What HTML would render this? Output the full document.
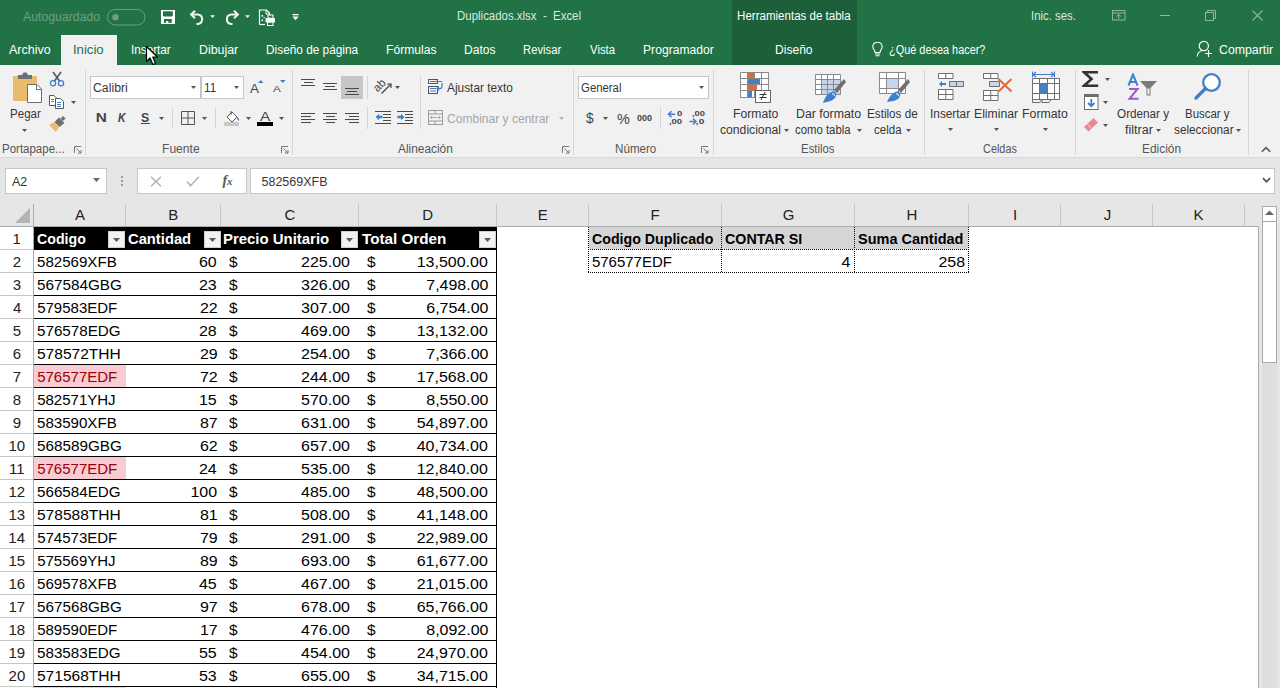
<!DOCTYPE html><html><head><meta charset="utf-8"><style>
*{margin:0;padding:0;box-sizing:border-box}
html,body{width:1280px;height:688px;overflow:hidden;background:#fff;font-family:"Liberation Sans",sans-serif;position:relative}
.a{position:absolute}
.t{position:absolute;white-space:nowrap;line-height:1}
.cell{position:absolute;white-space:nowrap;font-size:15px;line-height:22px;height:22px;color:#000}
.hdr{position:absolute;font-size:14px;color:#222;line-height:22px;text-align:center}
.rh{position:absolute;left:0;width:29px;text-align:right;font-size:14px;color:#222;line-height:22px}
.tab{position:absolute;top:42px;font-size:12.5px;color:#fff;line-height:16px;white-space:nowrap}
.rb{position:absolute;font-size:12.5px;color:#262626;line-height:16px;white-space:nowrap}
.gl{position:absolute;font-size:12.5px;color:#444;line-height:16px;white-space:nowrap}
.sep{position:absolute;width:1px;background:#d4d4d4}
.dd{position:absolute;width:0;height:0;border-left:3px solid transparent;border-right:3px solid transparent;border-top:3px solid #555}
</style></head><body>
<div class="a" style="left:0;top:0;width:1280px;height:65px;background:#217346"></div>
<div class="a" style="left:732px;top:0;width:125px;height:65px;background:#1d5f39"></div>
<div class="a" style="left:61px;top:35px;width:56px;height:30px;background:#f1f1f1"></div>
<div class="a" style="left:0;top:65px;width:1280px;height:92px;background:#f1f1f1"></div>
<div class="a" style="left:0;top:157px;width:1280px;height:1px;background:#d6dbd6"></div>
<div class="a" style="left:0;top:158px;width:1280px;height:69px;background:#e6e6e6"></div>
<div class="a" style="left:34px;top:227px;width:1224px;height:461px;background:#fff"></div>
<div class="a" style="left:1258px;top:226px;width:1px;height:462px;background:#ababab"></div>
<div class="a" style="left:0;top:226px;width:1258px;height:1px;background:#ababab"></div>
<div class="a" style="left:33px;top:204px;width:1px;height:484px;background:#ababab"></div>
<div class="a" style="left:125px;top:204px;width:1px;height:22px;background:#c6c6c6"></div>
<div class="t" style="left:75.00px;top:207.00px;font-size:15px;line-height:15px;color:#222;">A</div>
<div class="a" style="left:220px;top:204px;width:1px;height:22px;background:#c6c6c6"></div>
<div class="t" style="left:168.28px;top:207.00px;font-size:15px;line-height:15px;color:#222;">B</div>
<div class="a" style="left:358px;top:204px;width:1px;height:22px;background:#c6c6c6"></div>
<div class="t" style="left:284.50px;top:207.00px;font-size:15px;line-height:15px;color:#222;">C</div>
<div class="a" style="left:496px;top:204px;width:1px;height:22px;background:#c6c6c6"></div>
<div class="t" style="left:422.32px;top:207.00px;font-size:15px;line-height:15px;color:#222;">D</div>
<div class="a" style="left:588px;top:204px;width:1px;height:22px;background:#c6c6c6"></div>
<div class="t" style="left:537.70px;top:207.00px;font-size:15px;line-height:15px;color:#222;">E</div>
<div class="a" style="left:721px;top:204px;width:1px;height:22px;background:#c6c6c6"></div>
<div class="t" style="left:650.60px;top:207.00px;font-size:15px;line-height:15px;color:#222;">F</div>
<div class="a" style="left:854px;top:204px;width:1px;height:22px;background:#c6c6c6"></div>
<div class="t" style="left:782.85px;top:207.00px;font-size:15px;line-height:15px;color:#222;">G</div>
<div class="a" style="left:968px;top:204px;width:1px;height:22px;background:#c6c6c6"></div>
<div class="t" style="left:906.58px;top:207.00px;font-size:15px;line-height:15px;color:#222;">H</div>
<div class="a" style="left:1060px;top:204px;width:1px;height:22px;background:#c6c6c6"></div>
<div class="t" style="left:1012.90px;top:207.00px;font-size:15px;line-height:15px;color:#222;">I</div>
<div class="a" style="left:1152px;top:204px;width:1px;height:22px;background:#c6c6c6"></div>
<div class="t" style="left:1103.67px;top:207.00px;font-size:15px;line-height:15px;color:#222;">J</div>
<div class="a" style="left:1244px;top:204px;width:1px;height:22px;background:#c6c6c6"></div>
<div class="t" style="left:1193.47px;top:207.00px;font-size:15px;line-height:15px;color:#222;">K</div>
<div class="t" style="left:12.62px;top:231.00px;font-size:15px;line-height:15px;color:#222;">1</div>
<div class="a" style="left:0;top:249px;width:33px;height:1px;background:#c6c6c6"></div>
<div class="t" style="left:12.82px;top:254.00px;font-size:15px;line-height:15px;color:#222;">2</div>
<div class="a" style="left:0;top:272px;width:33px;height:1px;background:#c6c6c6"></div>
<div class="t" style="left:12.85px;top:277.00px;font-size:15px;line-height:15px;color:#222;">3</div>
<div class="a" style="left:0;top:295px;width:33px;height:1px;background:#c6c6c6"></div>
<div class="t" style="left:12.88px;top:300.00px;font-size:15px;line-height:15px;color:#222;">4</div>
<div class="a" style="left:0;top:318px;width:33px;height:1px;background:#c6c6c6"></div>
<div class="t" style="left:12.85px;top:323.00px;font-size:15px;line-height:15px;color:#222;">5</div>
<div class="a" style="left:0;top:341px;width:33px;height:1px;background:#c6c6c6"></div>
<div class="t" style="left:12.78px;top:346.00px;font-size:15px;line-height:15px;color:#222;">6</div>
<div class="a" style="left:0;top:364px;width:33px;height:1px;background:#c6c6c6"></div>
<div class="t" style="left:12.82px;top:369.00px;font-size:15px;line-height:15px;color:#222;">7</div>
<div class="a" style="left:0;top:387px;width:33px;height:1px;background:#c6c6c6"></div>
<div class="t" style="left:12.82px;top:392.00px;font-size:15px;line-height:15px;color:#222;">8</div>
<div class="a" style="left:0;top:410px;width:33px;height:1px;background:#c6c6c6"></div>
<div class="t" style="left:12.82px;top:415.00px;font-size:15px;line-height:15px;color:#222;">9</div>
<div class="a" style="left:0;top:433px;width:33px;height:1px;background:#c6c6c6"></div>
<div class="t" style="left:8.38px;top:438.00px;font-size:15px;line-height:15px;color:#222;">10</div>
<div class="a" style="left:0;top:456px;width:33px;height:1px;background:#c6c6c6"></div>
<div class="t" style="left:9.00px;top:461.00px;font-size:15px;line-height:15px;color:#222;">11</div>
<div class="a" style="left:0;top:479px;width:33px;height:1px;background:#c6c6c6"></div>
<div class="t" style="left:8.45px;top:484.00px;font-size:15px;line-height:15px;color:#222;">12</div>
<div class="a" style="left:0;top:502px;width:33px;height:1px;background:#c6c6c6"></div>
<div class="t" style="left:8.40px;top:507.00px;font-size:15px;line-height:15px;color:#222;">13</div>
<div class="a" style="left:0;top:525px;width:33px;height:1px;background:#c6c6c6"></div>
<div class="t" style="left:8.30px;top:530.00px;font-size:15px;line-height:15px;color:#222;">14</div>
<div class="a" style="left:0;top:548px;width:33px;height:1px;background:#c6c6c6"></div>
<div class="t" style="left:8.40px;top:553.00px;font-size:15px;line-height:15px;color:#222;">15</div>
<div class="a" style="left:0;top:571px;width:33px;height:1px;background:#c6c6c6"></div>
<div class="t" style="left:8.40px;top:576.00px;font-size:15px;line-height:15px;color:#222;">16</div>
<div class="a" style="left:0;top:594px;width:33px;height:1px;background:#c6c6c6"></div>
<div class="t" style="left:8.45px;top:599.00px;font-size:15px;line-height:15px;color:#222;">17</div>
<div class="a" style="left:0;top:617px;width:33px;height:1px;background:#c6c6c6"></div>
<div class="t" style="left:8.40px;top:622.00px;font-size:15px;line-height:15px;color:#222;">18</div>
<div class="a" style="left:0;top:640px;width:33px;height:1px;background:#c6c6c6"></div>
<div class="t" style="left:8.43px;top:645.00px;font-size:15px;line-height:15px;color:#222;">19</div>
<div class="a" style="left:0;top:663px;width:33px;height:1px;background:#c6c6c6"></div>
<div class="t" style="left:8.57px;top:668.00px;font-size:15px;line-height:15px;color:#222;">20</div>
<div class="a" style="left:0;top:686px;width:33px;height:1px;background:#c6c6c6"></div>
<div class="t" style="left:8.65px;top:691.00px;font-size:15px;line-height:15px;color:#222;">21</div>
<div class="a" style="left:0;top:709px;width:33px;height:1px;background:#c6c6c6"></div>
<svg class="a" style="left:15px;top:208px" width="16" height="15"><path d="M15 0 L15 15 L0 15 Z" fill="#b4b4b4"/></svg>
<div class="a" style="left:34px;top:227px;width:463px;height:23px;background:#000"></div>
<div class="a" style="left:34px;top:365px;width:92px;height:22px;background:#f7cdd3"></div>
<div class="a" style="left:34px;top:457px;width:92px;height:22px;background:#f7cdd3"></div>
<div class="a" style="left:34px;top:687px;width:92px;height:22px;background:#f7cdd3"></div>
<div class="a" style="left:34px;top:249px;width:463px;height:1px;background:#000"></div>
<div class="a" style="left:34px;top:272px;width:463px;height:1px;background:#000"></div>
<div class="a" style="left:34px;top:295px;width:463px;height:1px;background:#000"></div>
<div class="a" style="left:34px;top:318px;width:463px;height:1px;background:#000"></div>
<div class="a" style="left:34px;top:341px;width:463px;height:1px;background:#000"></div>
<div class="a" style="left:34px;top:364px;width:463px;height:1px;background:#000"></div>
<div class="a" style="left:34px;top:387px;width:463px;height:1px;background:#000"></div>
<div class="a" style="left:34px;top:410px;width:463px;height:1px;background:#000"></div>
<div class="a" style="left:34px;top:433px;width:463px;height:1px;background:#000"></div>
<div class="a" style="left:34px;top:456px;width:463px;height:1px;background:#000"></div>
<div class="a" style="left:34px;top:479px;width:463px;height:1px;background:#000"></div>
<div class="a" style="left:34px;top:502px;width:463px;height:1px;background:#000"></div>
<div class="a" style="left:34px;top:525px;width:463px;height:1px;background:#000"></div>
<div class="a" style="left:34px;top:548px;width:463px;height:1px;background:#000"></div>
<div class="a" style="left:34px;top:571px;width:463px;height:1px;background:#000"></div>
<div class="a" style="left:34px;top:594px;width:463px;height:1px;background:#000"></div>
<div class="a" style="left:34px;top:617px;width:463px;height:1px;background:#000"></div>
<div class="a" style="left:34px;top:640px;width:463px;height:1px;background:#000"></div>
<div class="a" style="left:34px;top:663px;width:463px;height:1px;background:#000"></div>
<div class="a" style="left:34px;top:686px;width:463px;height:1px;background:#000"></div>
<div class="a" style="left:496px;top:227px;width:1px;height:461px;background:#000"></div>
<div class="t" style="left:36.70px;top:231.00px;font-size:15px;line-height:15px;color:#fff;font-weight:bold;transform:scaleX(0.9446);transform-origin:0.60px 0;">Codigo</div>
<div class="t" style="left:128.40px;top:231.00px;font-size:15px;line-height:15px;color:#fff;font-weight:bold;transform:scaleX(0.9832);transform-origin:0.60px 0;">Cantidad</div>
<div class="t" style="left:223.00px;top:231.00px;font-size:15px;line-height:15px;color:#fff;font-weight:bold;transform:scaleX(0.9948);transform-origin:1.00px 0;">Precio Unitario</div>
<div class="t" style="left:362.25px;top:231.00px;font-size:15px;line-height:15px;color:#fff;font-weight:bold;transform:scaleX(1.0159);transform-origin:0.15px 0;">Total Orden</div>
<div class="a" style="left:108px;top:231px;width:17px;height:17px;background:#f2f2f2;border:1px solid #d0d0d0"></div>
<svg class="a" style="left:113px;top:238px" width="8" height="5"><path d="M0 0 L7 0 L3.5 4 Z" fill="#595959"/></svg>
<div class="a" style="left:204px;top:231px;width:17px;height:17px;background:#f2f2f2;border:1px solid #d0d0d0"></div>
<svg class="a" style="left:209px;top:238px" width="8" height="5"><path d="M0 0 L7 0 L3.5 4 Z" fill="#595959"/></svg>
<div class="a" style="left:341px;top:231px;width:17px;height:17px;background:#f2f2f2;border:1px solid #d0d0d0"></div>
<svg class="a" style="left:346px;top:238px" width="8" height="5"><path d="M0 0 L7 0 L3.5 4 Z" fill="#595959"/></svg>
<div class="a" style="left:479px;top:231px;width:17px;height:17px;background:#f2f2f2;border:1px solid #d0d0d0"></div>
<svg class="a" style="left:484px;top:238px" width="8" height="5"><path d="M0 0 L7 0 L3.5 4 Z" fill="#595959"/></svg>
<div class="t" style="left:37.20px;top:254.00px;font-size:15px;line-height:15px;color:#000;transform:scaleX(1.0064);transform-origin:0.60px 0;">582569XFB</div>
<div class="t" style="left:200.40px;top:254.00px;font-size:15px;line-height:15px;color:#000;transform:scaleX(1.0650);transform-origin:16.10px 0;">60</div>
<div class="t" style="left:229.15px;top:254.00px;font-size:15px;line-height:15px;color:#000;transform:scaleX(1.0314);transform-origin:0.15px 0;">$</div>
<div class="t" style="left:303.50px;top:254.00px;font-size:15px;line-height:15px;color:#000;transform:scaleX(1.0650);transform-origin:45.30px 0;">225.00</div>
<div class="t" style="left:366.85px;top:254.00px;font-size:15px;line-height:15px;color:#000;transform:scaleX(1.0314);transform-origin:0.15px 0;">$</div>
<div class="t" style="left:421.35px;top:254.00px;font-size:15px;line-height:15px;color:#000;transform:scaleX(1.0650);transform-origin:66.15px 0;">13,500.00</div>
<div class="t" style="left:37.20px;top:277.00px;font-size:15px;line-height:15px;color:#000;transform:scaleX(1.0167);transform-origin:0.60px 0;">567584GBG</div>
<div class="t" style="left:200.45px;top:277.00px;font-size:15px;line-height:15px;color:#000;transform:scaleX(1.0650);transform-origin:16.05px 0;">23</div>
<div class="t" style="left:229.15px;top:277.00px;font-size:15px;line-height:15px;color:#000;transform:scaleX(1.0314);transform-origin:0.15px 0;">$</div>
<div class="t" style="left:303.50px;top:277.00px;font-size:15px;line-height:15px;color:#000;transform:scaleX(1.0650);transform-origin:45.30px 0;">326.00</div>
<div class="t" style="left:366.85px;top:277.00px;font-size:15px;line-height:15px;color:#000;transform:scaleX(1.0314);transform-origin:0.15px 0;">$</div>
<div class="t" style="left:429.70px;top:277.00px;font-size:15px;line-height:15px;color:#000;transform:scaleX(1.0650);transform-origin:57.80px 0;">7,498.00</div>
<div class="t" style="left:37.20px;top:300.00px;font-size:15px;line-height:15px;color:#000;">579583EDF</div>
<div class="t" style="left:200.55px;top:300.00px;font-size:15px;line-height:15px;color:#000;transform:scaleX(1.0650);transform-origin:15.95px 0;">22</div>
<div class="t" style="left:229.15px;top:300.00px;font-size:15px;line-height:15px;color:#000;transform:scaleX(1.0314);transform-origin:0.15px 0;">$</div>
<div class="t" style="left:303.50px;top:300.00px;font-size:15px;line-height:15px;color:#000;transform:scaleX(1.0650);transform-origin:45.30px 0;">307.00</div>
<div class="t" style="left:366.85px;top:300.00px;font-size:15px;line-height:15px;color:#000;transform:scaleX(1.0314);transform-origin:0.15px 0;">$</div>
<div class="t" style="left:429.70px;top:300.00px;font-size:15px;line-height:15px;color:#000;transform:scaleX(1.0650);transform-origin:57.80px 0;">6,754.00</div>
<div class="t" style="left:37.20px;top:323.00px;font-size:15px;line-height:15px;color:#000;transform:scaleX(1.0125);transform-origin:0.60px 0;">576578EDG</div>
<div class="t" style="left:200.45px;top:323.00px;font-size:15px;line-height:15px;color:#000;transform:scaleX(1.0650);transform-origin:16.05px 0;">28</div>
<div class="t" style="left:229.15px;top:323.00px;font-size:15px;line-height:15px;color:#000;transform:scaleX(1.0314);transform-origin:0.15px 0;">$</div>
<div class="t" style="left:303.50px;top:323.00px;font-size:15px;line-height:15px;color:#000;transform:scaleX(1.0650);transform-origin:45.30px 0;">469.00</div>
<div class="t" style="left:366.85px;top:323.00px;font-size:15px;line-height:15px;color:#000;transform:scaleX(1.0314);transform-origin:0.15px 0;">$</div>
<div class="t" style="left:421.35px;top:323.00px;font-size:15px;line-height:15px;color:#000;transform:scaleX(1.0650);transform-origin:66.15px 0;">13,132.00</div>
<div class="t" style="left:37.20px;top:346.00px;font-size:15px;line-height:15px;color:#000;transform:scaleX(1.0353);transform-origin:0.60px 0;">578572THH</div>
<div class="t" style="left:200.50px;top:346.00px;font-size:15px;line-height:15px;color:#000;transform:scaleX(1.0650);transform-origin:16.00px 0;">29</div>
<div class="t" style="left:229.15px;top:346.00px;font-size:15px;line-height:15px;color:#000;transform:scaleX(1.0314);transform-origin:0.15px 0;">$</div>
<div class="t" style="left:303.50px;top:346.00px;font-size:15px;line-height:15px;color:#000;transform:scaleX(1.0650);transform-origin:45.30px 0;">254.00</div>
<div class="t" style="left:366.85px;top:346.00px;font-size:15px;line-height:15px;color:#000;transform:scaleX(1.0314);transform-origin:0.15px 0;">$</div>
<div class="t" style="left:429.70px;top:346.00px;font-size:15px;line-height:15px;color:#000;transform:scaleX(1.0650);transform-origin:57.80px 0;">7,366.00</div>
<div class="t" style="left:37.20px;top:369.00px;font-size:15px;line-height:15px;color:#9c0006;">576577EDF</div>
<div class="t" style="left:200.55px;top:369.00px;font-size:15px;line-height:15px;color:#000;transform:scaleX(1.0650);transform-origin:15.95px 0;">72</div>
<div class="t" style="left:229.15px;top:369.00px;font-size:15px;line-height:15px;color:#000;transform:scaleX(1.0314);transform-origin:0.15px 0;">$</div>
<div class="t" style="left:303.50px;top:369.00px;font-size:15px;line-height:15px;color:#000;transform:scaleX(1.0650);transform-origin:45.30px 0;">244.00</div>
<div class="t" style="left:366.85px;top:369.00px;font-size:15px;line-height:15px;color:#000;transform:scaleX(1.0314);transform-origin:0.15px 0;">$</div>
<div class="t" style="left:421.35px;top:369.00px;font-size:15px;line-height:15px;color:#000;transform:scaleX(1.0650);transform-origin:66.15px 0;">17,568.00</div>
<div class="t" style="left:37.20px;top:392.00px;font-size:15px;line-height:15px;color:#000;">582571YHJ</div>
<div class="t" style="left:200.45px;top:392.00px;font-size:15px;line-height:15px;color:#000;transform:scaleX(1.0650);transform-origin:16.05px 0;">15</div>
<div class="t" style="left:229.15px;top:392.00px;font-size:15px;line-height:15px;color:#000;transform:scaleX(1.0314);transform-origin:0.15px 0;">$</div>
<div class="t" style="left:303.50px;top:392.00px;font-size:15px;line-height:15px;color:#000;transform:scaleX(1.0650);transform-origin:45.30px 0;">570.00</div>
<div class="t" style="left:366.85px;top:392.00px;font-size:15px;line-height:15px;color:#000;transform:scaleX(1.0314);transform-origin:0.15px 0;">$</div>
<div class="t" style="left:429.70px;top:392.00px;font-size:15px;line-height:15px;color:#000;transform:scaleX(1.0650);transform-origin:57.80px 0;">8,550.00</div>
<div class="t" style="left:37.20px;top:415.00px;font-size:15px;line-height:15px;color:#000;transform:scaleX(1.0064);transform-origin:0.60px 0;">583590XFB</div>
<div class="t" style="left:200.55px;top:415.00px;font-size:15px;line-height:15px;color:#000;transform:scaleX(1.0650);transform-origin:15.95px 0;">87</div>
<div class="t" style="left:229.15px;top:415.00px;font-size:15px;line-height:15px;color:#000;transform:scaleX(1.0314);transform-origin:0.15px 0;">$</div>
<div class="t" style="left:303.50px;top:415.00px;font-size:15px;line-height:15px;color:#000;transform:scaleX(1.0650);transform-origin:45.30px 0;">631.00</div>
<div class="t" style="left:366.85px;top:415.00px;font-size:15px;line-height:15px;color:#000;transform:scaleX(1.0314);transform-origin:0.15px 0;">$</div>
<div class="t" style="left:421.35px;top:415.00px;font-size:15px;line-height:15px;color:#000;transform:scaleX(1.0650);transform-origin:66.15px 0;">54,897.00</div>
<div class="t" style="left:37.20px;top:438.00px;font-size:15px;line-height:15px;color:#000;transform:scaleX(1.0167);transform-origin:0.60px 0;">568589GBG</div>
<div class="t" style="left:200.55px;top:438.00px;font-size:15px;line-height:15px;color:#000;transform:scaleX(1.0650);transform-origin:15.95px 0;">62</div>
<div class="t" style="left:229.15px;top:438.00px;font-size:15px;line-height:15px;color:#000;transform:scaleX(1.0314);transform-origin:0.15px 0;">$</div>
<div class="t" style="left:303.50px;top:438.00px;font-size:15px;line-height:15px;color:#000;transform:scaleX(1.0650);transform-origin:45.30px 0;">657.00</div>
<div class="t" style="left:366.85px;top:438.00px;font-size:15px;line-height:15px;color:#000;transform:scaleX(1.0314);transform-origin:0.15px 0;">$</div>
<div class="t" style="left:421.35px;top:438.00px;font-size:15px;line-height:15px;color:#000;transform:scaleX(1.0650);transform-origin:66.15px 0;">40,734.00</div>
<div class="t" style="left:37.20px;top:461.00px;font-size:15px;line-height:15px;color:#9c0006;">576577EDF</div>
<div class="t" style="left:200.25px;top:461.00px;font-size:15px;line-height:15px;color:#000;transform:scaleX(1.0650);transform-origin:16.25px 0;">24</div>
<div class="t" style="left:229.15px;top:461.00px;font-size:15px;line-height:15px;color:#000;transform:scaleX(1.0314);transform-origin:0.15px 0;">$</div>
<div class="t" style="left:303.50px;top:461.00px;font-size:15px;line-height:15px;color:#000;transform:scaleX(1.0650);transform-origin:45.30px 0;">535.00</div>
<div class="t" style="left:366.85px;top:461.00px;font-size:15px;line-height:15px;color:#000;transform:scaleX(1.0314);transform-origin:0.15px 0;">$</div>
<div class="t" style="left:421.35px;top:461.00px;font-size:15px;line-height:15px;color:#000;transform:scaleX(1.0650);transform-origin:66.15px 0;">12,840.00</div>
<div class="t" style="left:37.20px;top:484.00px;font-size:15px;line-height:15px;color:#000;transform:scaleX(1.0125);transform-origin:0.60px 0;">566584EDG</div>
<div class="t" style="left:192.05px;top:484.00px;font-size:15px;line-height:15px;color:#000;transform:scaleX(1.0650);transform-origin:24.45px 0;">100</div>
<div class="t" style="left:229.15px;top:484.00px;font-size:15px;line-height:15px;color:#000;transform:scaleX(1.0314);transform-origin:0.15px 0;">$</div>
<div class="t" style="left:303.50px;top:484.00px;font-size:15px;line-height:15px;color:#000;transform:scaleX(1.0650);transform-origin:45.30px 0;">485.00</div>
<div class="t" style="left:366.85px;top:484.00px;font-size:15px;line-height:15px;color:#000;transform:scaleX(1.0314);transform-origin:0.15px 0;">$</div>
<div class="t" style="left:421.35px;top:484.00px;font-size:15px;line-height:15px;color:#000;transform:scaleX(1.0650);transform-origin:66.15px 0;">48,500.00</div>
<div class="t" style="left:37.20px;top:507.00px;font-size:15px;line-height:15px;color:#000;transform:scaleX(1.0353);transform-origin:0.60px 0;">578588THH</div>
<div class="t" style="left:200.55px;top:507.00px;font-size:15px;line-height:15px;color:#000;transform:scaleX(1.0650);transform-origin:15.95px 0;">81</div>
<div class="t" style="left:229.15px;top:507.00px;font-size:15px;line-height:15px;color:#000;transform:scaleX(1.0314);transform-origin:0.15px 0;">$</div>
<div class="t" style="left:303.50px;top:507.00px;font-size:15px;line-height:15px;color:#000;transform:scaleX(1.0650);transform-origin:45.30px 0;">508.00</div>
<div class="t" style="left:366.85px;top:507.00px;font-size:15px;line-height:15px;color:#000;transform:scaleX(1.0314);transform-origin:0.15px 0;">$</div>
<div class="t" style="left:421.35px;top:507.00px;font-size:15px;line-height:15px;color:#000;transform:scaleX(1.0650);transform-origin:66.15px 0;">41,148.00</div>
<div class="t" style="left:37.20px;top:530.00px;font-size:15px;line-height:15px;color:#000;">574573EDF</div>
<div class="t" style="left:200.50px;top:530.00px;font-size:15px;line-height:15px;color:#000;transform:scaleX(1.0650);transform-origin:16.00px 0;">79</div>
<div class="t" style="left:229.15px;top:530.00px;font-size:15px;line-height:15px;color:#000;transform:scaleX(1.0314);transform-origin:0.15px 0;">$</div>
<div class="t" style="left:303.50px;top:530.00px;font-size:15px;line-height:15px;color:#000;transform:scaleX(1.0650);transform-origin:45.30px 0;">291.00</div>
<div class="t" style="left:366.85px;top:530.00px;font-size:15px;line-height:15px;color:#000;transform:scaleX(1.0314);transform-origin:0.15px 0;">$</div>
<div class="t" style="left:421.35px;top:530.00px;font-size:15px;line-height:15px;color:#000;transform:scaleX(1.0650);transform-origin:66.15px 0;">22,989.00</div>
<div class="t" style="left:37.20px;top:553.00px;font-size:15px;line-height:15px;color:#000;">575569YHJ</div>
<div class="t" style="left:200.50px;top:553.00px;font-size:15px;line-height:15px;color:#000;transform:scaleX(1.0650);transform-origin:16.00px 0;">89</div>
<div class="t" style="left:229.15px;top:553.00px;font-size:15px;line-height:15px;color:#000;transform:scaleX(1.0314);transform-origin:0.15px 0;">$</div>
<div class="t" style="left:303.50px;top:553.00px;font-size:15px;line-height:15px;color:#000;transform:scaleX(1.0650);transform-origin:45.30px 0;">693.00</div>
<div class="t" style="left:366.85px;top:553.00px;font-size:15px;line-height:15px;color:#000;transform:scaleX(1.0314);transform-origin:0.15px 0;">$</div>
<div class="t" style="left:421.35px;top:553.00px;font-size:15px;line-height:15px;color:#000;transform:scaleX(1.0650);transform-origin:66.15px 0;">61,677.00</div>
<div class="t" style="left:37.20px;top:576.00px;font-size:15px;line-height:15px;color:#000;transform:scaleX(1.0064);transform-origin:0.60px 0;">569578XFB</div>
<div class="t" style="left:200.45px;top:576.00px;font-size:15px;line-height:15px;color:#000;transform:scaleX(1.0650);transform-origin:16.05px 0;">45</div>
<div class="t" style="left:229.15px;top:576.00px;font-size:15px;line-height:15px;color:#000;transform:scaleX(1.0314);transform-origin:0.15px 0;">$</div>
<div class="t" style="left:303.50px;top:576.00px;font-size:15px;line-height:15px;color:#000;transform:scaleX(1.0650);transform-origin:45.30px 0;">467.00</div>
<div class="t" style="left:366.85px;top:576.00px;font-size:15px;line-height:15px;color:#000;transform:scaleX(1.0314);transform-origin:0.15px 0;">$</div>
<div class="t" style="left:421.35px;top:576.00px;font-size:15px;line-height:15px;color:#000;transform:scaleX(1.0650);transform-origin:66.15px 0;">21,015.00</div>
<div class="t" style="left:37.20px;top:599.00px;font-size:15px;line-height:15px;color:#000;transform:scaleX(1.0167);transform-origin:0.60px 0;">567568GBG</div>
<div class="t" style="left:200.55px;top:599.00px;font-size:15px;line-height:15px;color:#000;transform:scaleX(1.0650);transform-origin:15.95px 0;">97</div>
<div class="t" style="left:229.15px;top:599.00px;font-size:15px;line-height:15px;color:#000;transform:scaleX(1.0314);transform-origin:0.15px 0;">$</div>
<div class="t" style="left:303.50px;top:599.00px;font-size:15px;line-height:15px;color:#000;transform:scaleX(1.0650);transform-origin:45.30px 0;">678.00</div>
<div class="t" style="left:366.85px;top:599.00px;font-size:15px;line-height:15px;color:#000;transform:scaleX(1.0314);transform-origin:0.15px 0;">$</div>
<div class="t" style="left:421.35px;top:599.00px;font-size:15px;line-height:15px;color:#000;transform:scaleX(1.0650);transform-origin:66.15px 0;">65,766.00</div>
<div class="t" style="left:37.20px;top:622.00px;font-size:15px;line-height:15px;color:#000;">589590EDF</div>
<div class="t" style="left:200.55px;top:622.00px;font-size:15px;line-height:15px;color:#000;transform:scaleX(1.0650);transform-origin:15.95px 0;">17</div>
<div class="t" style="left:229.15px;top:622.00px;font-size:15px;line-height:15px;color:#000;transform:scaleX(1.0314);transform-origin:0.15px 0;">$</div>
<div class="t" style="left:303.50px;top:622.00px;font-size:15px;line-height:15px;color:#000;transform:scaleX(1.0650);transform-origin:45.30px 0;">476.00</div>
<div class="t" style="left:366.85px;top:622.00px;font-size:15px;line-height:15px;color:#000;transform:scaleX(1.0314);transform-origin:0.15px 0;">$</div>
<div class="t" style="left:429.70px;top:622.00px;font-size:15px;line-height:15px;color:#000;transform:scaleX(1.0650);transform-origin:57.80px 0;">8,092.00</div>
<div class="t" style="left:37.20px;top:645.00px;font-size:15px;line-height:15px;color:#000;transform:scaleX(1.0125);transform-origin:0.60px 0;">583583EDG</div>
<div class="t" style="left:200.45px;top:645.00px;font-size:15px;line-height:15px;color:#000;transform:scaleX(1.0650);transform-origin:16.05px 0;">55</div>
<div class="t" style="left:229.15px;top:645.00px;font-size:15px;line-height:15px;color:#000;transform:scaleX(1.0314);transform-origin:0.15px 0;">$</div>
<div class="t" style="left:303.50px;top:645.00px;font-size:15px;line-height:15px;color:#000;transform:scaleX(1.0650);transform-origin:45.30px 0;">454.00</div>
<div class="t" style="left:366.85px;top:645.00px;font-size:15px;line-height:15px;color:#000;transform:scaleX(1.0314);transform-origin:0.15px 0;">$</div>
<div class="t" style="left:421.35px;top:645.00px;font-size:15px;line-height:15px;color:#000;transform:scaleX(1.0650);transform-origin:66.15px 0;">24,970.00</div>
<div class="t" style="left:37.20px;top:668.00px;font-size:15px;line-height:15px;color:#000;transform:scaleX(1.0353);transform-origin:0.60px 0;">571568THH</div>
<div class="t" style="left:200.45px;top:668.00px;font-size:15px;line-height:15px;color:#000;transform:scaleX(1.0650);transform-origin:16.05px 0;">53</div>
<div class="t" style="left:229.15px;top:668.00px;font-size:15px;line-height:15px;color:#000;transform:scaleX(1.0314);transform-origin:0.15px 0;">$</div>
<div class="t" style="left:303.50px;top:668.00px;font-size:15px;line-height:15px;color:#000;transform:scaleX(1.0650);transform-origin:45.30px 0;">655.00</div>
<div class="t" style="left:366.85px;top:668.00px;font-size:15px;line-height:15px;color:#000;transform:scaleX(1.0314);transform-origin:0.15px 0;">$</div>
<div class="t" style="left:421.35px;top:668.00px;font-size:15px;line-height:15px;color:#000;transform:scaleX(1.0650);transform-origin:66.15px 0;">34,715.00</div>
<div class="a" style="left:589px;top:227px;width:379px;height:22px;background:#d5d5d5"></div>
<div class="a" style="left:588px;top:249px;width:381px;height:1px;background-image:linear-gradient(to right,#000 50%,transparent 50%);background-size:2px 1px"></div>
<div class="a" style="left:588px;top:272px;width:381px;height:1px;background-image:linear-gradient(to right,#000 50%,transparent 50%);background-size:2px 1px"></div>
<div class="a" style="left:588px;top:227px;width:1px;height:46px;background-image:linear-gradient(to bottom,#000 50%,transparent 50%);background-size:1px 2px"></div>
<div class="a" style="left:721px;top:227px;width:1px;height:46px;background-image:linear-gradient(to bottom,#000 50%,transparent 50%);background-size:1px 2px"></div>
<div class="a" style="left:854px;top:227px;width:1px;height:46px;background-image:linear-gradient(to bottom,#000 50%,transparent 50%);background-size:1px 2px"></div>
<div class="a" style="left:968px;top:227px;width:1px;height:46px;background-image:linear-gradient(to bottom,#000 50%,transparent 50%);background-size:1px 2px"></div>
<div class="t" style="left:591.90px;top:231.00px;font-size:15px;line-height:15px;color:#000;font-weight:bold;transform:scaleX(0.9461);transform-origin:0.60px 0;">Codigo Duplicado</div>
<div class="t" style="left:724.70px;top:231.00px;font-size:15px;line-height:15px;color:#000;font-weight:bold;transform:scaleX(0.9492);transform-origin:0.60px 0;">CONTAR SI</div>
<div class="t" style="left:857.55px;top:231.00px;font-size:15px;line-height:15px;color:#000;font-weight:bold;transform:scaleX(0.9656);transform-origin:0.45px 0;">Suma Cantidad</div>
<div class="t" style="left:591.90px;top:254.00px;font-size:15px;line-height:15px;color:#000;">576577EDF</div>
<div class="t" style="left:841.50px;top:254.00px;font-size:15px;line-height:15px;color:#000;transform:scaleX(1.0650);transform-origin:7.90px 0;">4</div>
<div class="t" style="left:940.00px;top:254.00px;font-size:15px;line-height:15px;color:#000;transform:scaleX(1.0650);transform-origin:24.40px 0;">258</div>
<div class="t" style="left:23.15px;top:10.75px;font-size:12.5px;line-height:12.5px;color:#6e9f80;transform:scaleX(0.9821);transform-origin:0.05px 0;">Autoguardado</div>
<svg class="a" style="left:107px;top:9px" width="39" height="17"><rect x="0.5" y="0.5" width="37.5" height="15.5" rx="7.75" fill="none" stroke="#6e9f80" stroke-width="1"/><circle cx="8.5" cy="8.2" r="3.2" fill="#6e9f80"/></svg>
<svg class="a" style="left:161px;top:10px" width="14" height="14"><rect x="0" y="0" width="14" height="14" fill="#fff"/><path d="M2 1.3 H11.8 V5.5 L11 6.6 H2.8 L2 5.5 Z" fill="#217346"/><rect x="3" y="9" width="7.8" height="3.8" fill="#217346"/><rect x="5" y="11" width="2.3" height="1.8" fill="#fff"/></svg>
<svg class="a" style="left:189px;top:9px" width="28" height="16"><path d="M3 5.5 H9 A4.8 4.8 0 0 1 9 15 H7.5" fill="none" stroke="#f2f2f2" stroke-width="2.1"/><path d="M6 1.8 L2.2 5.5 L6 9.2" fill="none" stroke="#f2f2f2" stroke-width="2.1"/><path d="M21 6.3 H26 L23.5 8.9 Z" fill="#f2f2f2"/></svg>
<svg class="a" style="left:224px;top:9px" width="28" height="16"><path d="M13 5.5 H7 A4.8 4.8 0 0 0 7 15 H8.5" fill="none" stroke="#f2f2f2" stroke-width="2.1"/><path d="M10 1.8 L13.8 5.5 L10 9.2" fill="none" stroke="#f2f2f2" stroke-width="2.1"/><path d="M21 6.3 H26 L23.5 8.9 Z" fill="#f2f2f2"/></svg>
<svg class="a" style="left:258px;top:9px" width="18" height="17"><path d="M1.5 15.5 V1 H8.5 L11.5 4 V6" fill="none" stroke="#fff" stroke-width="1.2"/><path d="M1.5 15.5 H7" stroke="#fff" stroke-width="1.2"/><path d="M8 1 V5 H11.5" fill="none" stroke="#fff" stroke-width="1"/><rect x="10" y="6" width="5" height="3.2" fill="none" stroke="#fff" stroke-width="1"/><rect x="7.5" y="9" width="9.5" height="4.6" rx="0.8" fill="#fff"/><rect x="9.5" y="13" width="5.5" height="3.5" fill="none" stroke="#fff" stroke-width="1"/><rect x="3.5" y="6" width="1.6" height="1.6" fill="#fff"/><rect x="5.5" y="8" width="1.2" height="1.2" fill="#fff"/><rect x="3.5" y="10.5" width="1.6" height="1.6" fill="#fff"/></svg>
<svg class="a" style="left:292px;top:13px" width="8" height="8"><rect x="0.5" y="1" width="6" height="1.3" fill="#fff"/><path d="M0.3 3.6 H6.7 L3.5 7.2 Z" fill="#fff"/></svg>
<div class="t" style="left:457.45px;top:9.75px;font-size:12.5px;line-height:12.5px;color:#dce9e0;transform:scaleX(0.9147);transform-origin:1.05px 0;white-space:pre;">Duplicados.xlsx  -  Excel</div>
<div class="t" style="left:737.25px;top:9.75px;font-size:12.5px;line-height:12.5px;color:#fff;transform:scaleX(0.9229);transform-origin:1.05px 0;">Herramientas de tabla</div>
<div class="t" style="left:1031.45px;top:9.75px;font-size:12.5px;line-height:12.5px;color:#dce9e0;transform:scaleX(0.9075);transform-origin:1.15px 0;">Inic. ses.</div>
<svg class="a" style="left:1112px;top:10px" width="14" height="11"><rect x="0.5" y="0.5" width="12.5" height="9.5" fill="none" stroke="#8db89b"/><path d="M0.5 3 H13" stroke="#8db89b"/><path d="M6.75 9 V4.5 M4.5 6.5 L6.75 4.3 L9 6.5" fill="none" stroke="#8db89b"/></svg>
<div class="a" style="left:1160px;top:15px;width:10px;height:1px;background:#8db89b"></div>
<svg class="a" style="left:1205px;top:10px" width="12" height="11"><rect x="0.5" y="2.5" width="8" height="8" fill="none" stroke="#8db89b"/><path d="M2.5 2.5 V0.5 H10.5 V8.5 H8.5" fill="none" stroke="#8db89b"/></svg>
<svg class="a" style="left:1252px;top:10px" width="11" height="11"><path d="M0.5 0.5 L10.5 10.5 M10.5 0.5 L0.5 10.5" stroke="#8db89b" stroke-width="1.1"/></svg>
<div class="t" style="left:8.95px;top:43.75px;font-size:12.5px;line-height:12.5px;color:#fff;">Archivo</div>
<div class="t" style="left:72.85px;top:43.75px;font-size:12.5px;line-height:12.5px;color:#217346;transform:scaleX(1.0526);transform-origin:1.15px 0;">Inicio</div>
<div class="t" style="left:131.45px;top:43.75px;font-size:12.5px;line-height:12.5px;color:#fff;transform:scaleX(0.9366);transform-origin:1.15px 0;">Insertar</div>
<div class="t" style="left:198.95px;top:43.75px;font-size:12.5px;line-height:12.5px;color:#fff;transform:scaleX(0.9909);transform-origin:1.05px 0;">Dibujar</div>
<div class="t" style="left:265.95px;top:43.75px;font-size:12.5px;line-height:12.5px;color:#fff;transform:scaleX(0.9455);transform-origin:1.05px 0;">Diseño de página</div>
<div class="t" style="left:385.95px;top:43.75px;font-size:12.5px;line-height:12.5px;color:#fff;transform:scaleX(0.9684);transform-origin:1.05px 0;">Fórmulas</div>
<div class="t" style="left:463.95px;top:43.75px;font-size:12.5px;line-height:12.5px;color:#fff;transform:scaleX(0.9631);transform-origin:1.05px 0;">Datos</div>
<div class="t" style="left:522.95px;top:43.75px;font-size:12.5px;line-height:12.5px;color:#fff;transform:scaleX(0.9002);transform-origin:1.05px 0;">Revisar</div>
<div class="t" style="left:589.95px;top:43.75px;font-size:12.5px;line-height:12.5px;color:#fff;transform:scaleX(0.9091);transform-origin:0.05px 0;">Vista</div>
<div class="t" style="left:643.45px;top:43.75px;font-size:12.5px;line-height:12.5px;color:#fff;transform:scaleX(0.9693);transform-origin:1.05px 0;">Programador</div>
<div class="t" style="left:774.95px;top:43.75px;font-size:12.5px;line-height:12.5px;color:#fff;transform:scaleX(0.9639);transform-origin:1.05px 0;">Diseño</div>
<div class="t" style="left:888.70px;top:43.75px;font-size:12.5px;line-height:12.5px;color:#fff;transform:scaleX(0.8714);transform-origin:0.80px 0;">¿Qué desea hacer?</div>
<svg class="a" style="left:872px;top:42px" width="11" height="15"><path d="M3 10.5 C3 8 0.8 7 0.8 4.8 A4.7 4.7 0 0 1 10.2 4.8 C10.2 7 8 8 8 10.5 Z" fill="none" stroke="#fff" stroke-width="1.1"/><path d="M3 12 H8 M3.5 13.8 H7.5" stroke="#fff" stroke-width="1.1"/></svg>
<div class="t" style="left:1219.15px;top:43.75px;font-size:12.5px;line-height:12.5px;color:#fff;transform:scaleX(0.9852);transform-origin:0.65px 0;">Compartir</div>
<svg class="a" style="left:1196px;top:40px" width="18" height="18"><circle cx="7.8" cy="6" r="4.6" fill="none" stroke="#fff" stroke-width="1.2"/><path d="M1.2 16.5 C1.5 13 4 10.8 7 10.5" fill="none" stroke="#fff" stroke-width="1.2"/><path d="M12.5 10 V17 M9 13.5 H16" stroke="#fff" stroke-width="1.2"/></svg>
<svg class="a" style="left:145px;top:45px" width="14" height="21"><path d="M1.5 1.5 V16.5 L5 13 L8 19.5 L10.5 18.5 L7.8 12 H12.5 Z" fill="#fff" stroke="#000" stroke-width="1.2" stroke-linejoin="round"/></svg>
<div class="a" style="left:85px;top:70px;width:1px;height:85px;background:#d6d6d6"></div>
<div class="a" style="left:292px;top:70px;width:1px;height:85px;background:#d6d6d6"></div>
<div class="a" style="left:573px;top:70px;width:1px;height:85px;background:#d6d6d6"></div>
<div class="a" style="left:713px;top:70px;width:1px;height:85px;background:#d6d6d6"></div>
<div class="a" style="left:924px;top:70px;width:1px;height:85px;background:#d6d6d6"></div>
<div class="a" style="left:1075px;top:70px;width:1px;height:85px;background:#d6d6d6"></div>
<div class="a" style="left:1248px;top:70px;width:1px;height:85px;background:#d6d6d6"></div>
<div class="t" style="left:2.45px;top:142.75px;font-size:12.5px;line-height:12.5px;color:#555;transform:scaleX(0.9174);transform-origin:1.05px 0;">Portapape...</div>
<div class="t" style="left:161.95px;top:142.75px;font-size:12.5px;line-height:12.5px;color:#555;transform:scaleX(0.9651);transform-origin:1.05px 0;">Fuente</div>
<div class="t" style="left:397.95px;top:142.75px;font-size:12.5px;line-height:12.5px;color:#555;transform:scaleX(0.9499);transform-origin:0.05px 0;">Alineación</div>
<div class="t" style="left:614.65px;top:142.75px;font-size:12.5px;line-height:12.5px;color:#555;transform:scaleX(0.9277);transform-origin:1.05px 0;">Número</div>
<div class="t" style="left:800.95px;top:142.75px;font-size:12.5px;line-height:12.5px;color:#555;transform:scaleX(0.9065);transform-origin:1.05px 0;">Estilos</div>
<div class="t" style="left:982.95px;top:142.75px;font-size:12.5px;line-height:12.5px;color:#555;transform:scaleX(0.8677);transform-origin:0.65px 0;">Celdas</div>
<div class="t" style="left:1142.45px;top:142.75px;font-size:12.5px;line-height:12.5px;color:#555;transform:scaleX(0.9502);transform-origin:1.05px 0;">Edición</div>
<svg class="a" style="left:74px;top:146px" width="8" height="8"><path d="M0.5 7 V0.5 H7" fill="none" stroke="#777"/><path d="M2.5 2.5 L7 7 M7 4 V7 H4" fill="none" stroke="#777"/></svg>
<svg class="a" style="left:281px;top:146px" width="8" height="8"><path d="M0.5 7 V0.5 H7" fill="none" stroke="#777"/><path d="M2.5 2.5 L7 7 M7 4 V7 H4" fill="none" stroke="#777"/></svg>
<svg class="a" style="left:562px;top:146px" width="8" height="8"><path d="M0.5 7 V0.5 H7" fill="none" stroke="#777"/><path d="M2.5 2.5 L7 7 M7 4 V7 H4" fill="none" stroke="#777"/></svg>
<svg class="a" style="left:701px;top:146px" width="8" height="8"><path d="M0.5 7 V0.5 H7" fill="none" stroke="#777"/><path d="M2.5 2.5 L7 7 M7 4 V7 H4" fill="none" stroke="#777"/></svg>
<svg class="a" style="left:1261px;top:146px" width="10" height="7"><path d="M0.8 5.8 L5 1.6 L9.2 5.8" fill="none" stroke="#555" stroke-width="1.5"/></svg>
<svg class="a" style="left:13px;top:72px" width="30" height="32"><rect x="0" y="4" width="24" height="25" fill="#ebbb6d"/><rect x="5" y="3" width="14" height="4" fill="#6f6f6f"/><rect x="9.5" y="0.5" width="5" height="4" rx="1.5" fill="#6f6f6f"/><path d="M14.5 12.5 H24 L28.5 17 V30.5 H14.5 Z" fill="#fff" stroke="#6f6f6f" stroke-width="1"/><path d="M23.5 12.5 V17.5 H28.5" fill="none" stroke="#6f6f6f" stroke-width="1"/></svg>
<div class="t" style="left:9.55px;top:107.75px;font-size:12.5px;line-height:12.5px;color:#363636;transform:scaleX(0.9190);transform-origin:1.05px 0;">Pegar</div>
<svg class="a" style="left:22.0px;top:128.5px" width="5" height="3"><path d="M0 0 H5 L2.5 3 Z" fill="#555"/></svg>
<svg class="a" style="left:49px;top:71px" width="16" height="16"><path d="M4 1 L10.5 10 M12 1 L5.5 10" stroke="#595959" stroke-width="1.6"/><circle cx="4" cy="12.3" r="2.6" fill="none" stroke="#3f7fce" stroke-width="1.3"/><circle cx="12" cy="12.3" r="2.6" fill="none" stroke="#3f7fce" stroke-width="1.3"/></svg>
<svg class="a" style="left:48px;top:94px" width="17" height="16"><path d="M1.5 1.5 H6 L8 3.5 V11.5 H1.5 Z" fill="#fff" stroke="#555" stroke-width="1"/><path d="M7.5 4.5 H12.5 L15.5 7.5 V14.5 H7.5 Z" fill="#fff" stroke="#555" stroke-width="1"/><path d="M3 5.5 H6 M3 7.5 H6 M9 8.5 H13 M9 10.5 H13 M9 12.5 H13" stroke="#3f7fce" stroke-width="1"/></svg>
<svg class="a" style="left:71.0px;top:101.0px" width="5" height="3"><path d="M0 0 H5 L2.5 3 Z" fill="#555"/></svg>
<svg class="a" style="left:48px;top:116px" width="18" height="17"><path d="M1 9 L6 6 L11 11 L8 16 Z" fill="#ebbb6d"/><path d="M6.5 6 L11 1.5 L16.5 7 L11.5 11 Z" fill="#6f6f6f"/><path d="M12.5 2.5 L15 0 L17.5 2.5 L15 5 Z" fill="#6f6f6f"/></svg>
<div class="a" style="left:90px;top:76px;width:111px;height:23px;background:#fff;border:1px solid #c6c6c6"></div>
<div class="a" style="left:201px;top:76px;width:43px;height:23px;background:#fff;border:1px solid #c6c6c6"></div>
<div class="t" style="left:92.85px;top:81.75px;font-size:12.5px;line-height:12.5px;color:#363636;transform:scaleX(0.9809);transform-origin:0.65px 0;">Calibri</div>
<div class="t" style="left:203.85px;top:81.75px;font-size:12.5px;line-height:12.5px;color:#363636;transform:scaleX(0.9298);transform-origin:0.95px 0;">11</div>
<svg class="a" style="left:191.0px;top:86.0px" width="5" height="3"><path d="M0 0 H5 L2.5 3 Z" fill="#555"/></svg>
<svg class="a" style="left:233.8px;top:86.0px" width="5" height="3"><path d="M0 0 H5 L2.5 3 Z" fill="#555"/></svg>
<div class="t" style="left:250.35px;top:82.50px;font-size:12px;line-height:12px;color:#444;transform:scaleX(1.1139);transform-origin:0.05px 0;">A</div>
<svg class="a" style="left:258px;top:80px" width="6" height="3"><path d="M0 3 H5.5 L2.75 0 Z" fill="#3f7fce"/></svg>
<div class="t" style="left:272.85px;top:84.25px;font-size:9.5px;line-height:9.5px;color:#444;transform:scaleX(1.2320);transform-origin:0.05px 0;">A</div>
<svg class="a" style="left:280px;top:80px" width="6" height="3"><path d="M0 0 H5.5 L2.75 3 Z" fill="#3f7fce"/></svg>
<div class="t" style="left:95.70px;top:112.00px;font-size:12px;line-height:12px;color:#444;font-weight:bold;transform:scaleX(1.2766);transform-origin:0.80px 0;">N</div>
<div class="t" style="left:117.60px;top:112.00px;font-size:12px;line-height:12px;color:#444;font-weight:bold;font-style:italic;transform:scaleX(0.8743);transform-origin:0.20px 0;">K</div>
<div class="t" style="left:141.25px;top:112.00px;font-size:12px;line-height:12px;color:#444;font-weight:bold;transform:scaleX(1.0278);transform-origin:0.35px 0;">S</div>
<div class="a" style="left:141px;top:123px;width:9px;height:1px;background:#444"></div>
<svg class="a" style="left:158.9px;top:117.0px" width="5" height="3"><path d="M0 0 H5 L2.5 3 Z" fill="#555"/></svg>
<div class="a" style="left:172px;top:108px;width:1px;height:20px;background:#d4d4d4"></div>
<svg class="a" style="left:181px;top:111px" width="14" height="14"><path d="M0.5 0.5 H13.5 V13.5 H0.5 Z M7 0.5 V13.5 M0.5 7 H13.5" fill="none" stroke="#555" stroke-width="1"/></svg>
<svg class="a" style="left:202.0px;top:117.0px" width="5" height="3"><path d="M0 0 H5 L2.5 3 Z" fill="#555"/></svg>
<div class="a" style="left:215px;top:108px;width:1px;height:20px;background:#d4d4d4"></div>
<svg class="a" style="left:224px;top:110px" width="17" height="17"><path d="M3 7 L8 2 L13 7 L8 12 Z" fill="#fff" stroke="#555" stroke-width="1"/><path d="M7 1 V5" stroke="#555"/><path d="M13 7 C15 8 15.5 10 15 11 L13 9 Z" fill="#3f7fce"/><rect x="0" y="12" width="15" height="4" fill="#c8c8c8"/></svg>
<svg class="a" style="left:245.5px;top:117.0px" width="5" height="3"><path d="M0 0 H5 L2.5 3 Z" fill="#555"/></svg>
<div class="t" style="left:260.15px;top:111.25px;font-size:12.5px;line-height:12.5px;color:#444;transform:scaleX(1.2364);transform-origin:0.05px 0;">A</div>
<div class="a" style="left:257px;top:122px;width:16px;height:4px;background:#000"></div>
<svg class="a" style="left:279.0px;top:117.0px" width="5" height="3"><path d="M0 0 H5 L2.5 3 Z" fill="#555"/></svg>
<div class="a" style="left:301px;top:79px;width:14px;height:1px;background:#4a4a4a"></div><div class="a" style="left:304px;top:82px;width:9px;height:1px;background:#4a4a4a"></div><div class="a" style="left:301px;top:85px;width:14px;height:1px;background:#4a4a4a"></div>
<div class="a" style="left:323px;top:83px;width:14px;height:1px;background:#4a4a4a"></div><div class="a" style="left:325px;top:86px;width:10px;height:1px;background:#4a4a4a"></div><div class="a" style="left:323px;top:89px;width:14px;height:1px;background:#4a4a4a"></div>
<div class="a" style="left:341px;top:76px;width:22px;height:23px;background:#c6c6c6"></div>
<div class="a" style="left:345px;top:88px;width:14px;height:1px;background:#4a4a4a"></div><div class="a" style="left:347px;top:91px;width:10px;height:1px;background:#4a4a4a"></div><div class="a" style="left:345px;top:94px;width:14px;height:1px;background:#4a4a4a"></div>
<div class="a" style="left:367px;top:76px;width:1px;height:23px;background:#d4d4d4"></div>
<div class="a" style="left:367px;top:107px;width:1px;height:22px;background:#d4d4d4"></div>
<svg class="a" style="left:373px;top:78px" width="20" height="18"><g transform="translate(4.5,14.5) rotate(-45)"><text x="0" y="0" font-family="Liberation Sans" font-size="11.5" fill="#444">ab</text></g><path d="M8.5 15.5 L18 6" stroke="#444" stroke-width="1.2"/><path d="M14 6 H18 V10" fill="none" stroke="#444" stroke-width="1.2"/></svg>
<svg class="a" style="left:395.0px;top:86.0px" width="5" height="3"><path d="M0 0 H5 L2.5 3 Z" fill="#555"/></svg>
<div class="a" style="left:301px;top:113px;width:14px;height:1px;background:#4a4a4a"></div><div class="a" style="left:301px;top:116px;width:10px;height:1px;background:#4a4a4a"></div><div class="a" style="left:301px;top:119px;width:14px;height:1px;background:#4a4a4a"></div><div class="a" style="left:301px;top:122px;width:10px;height:1px;background:#4a4a4a"></div>
<div class="a" style="left:323px;top:113px;width:14px;height:1px;background:#4a4a4a"></div><div class="a" style="left:325.5px;top:116px;width:9.0px;height:1px;background:#4a4a4a"></div><div class="a" style="left:323px;top:119px;width:14px;height:1px;background:#4a4a4a"></div><div class="a" style="left:325.5px;top:122px;width:9.0px;height:1px;background:#4a4a4a"></div>
<div class="a" style="left:345px;top:113px;width:14px;height:1px;background:#4a4a4a"></div><div class="a" style="left:349px;top:116px;width:10px;height:1px;background:#4a4a4a"></div><div class="a" style="left:345px;top:119px;width:14px;height:1px;background:#4a4a4a"></div><div class="a" style="left:349px;top:122px;width:10px;height:1px;background:#4a4a4a"></div>
<div class="a" style="left:375px;top:111px;width:16px;height:1px;background:#4a4a4a"></div><div class="a" style="left:383px;top:114px;width:8px;height:1px;background:#4a4a4a"></div><div class="a" style="left:383px;top:117px;width:8px;height:1px;background:#4a4a4a"></div><div class="a" style="left:383px;top:120px;width:8px;height:1px;background:#4a4a4a"></div><div class="a" style="left:375px;top:123px;width:16px;height:1px;background:#4a4a4a"></div>
<svg class="a" style="left:375px;top:113px" width="8" height="8"><path d="M0.5 4 L4 0.8 V2.8 H7.5 V5.2 H4 V7.2 Z" fill="#3f7fce"/></svg>
<div class="a" style="left:397px;top:111px;width:16px;height:1px;background:#4a4a4a"></div><div class="a" style="left:405px;top:114px;width:8px;height:1px;background:#4a4a4a"></div><div class="a" style="left:405px;top:117px;width:8px;height:1px;background:#4a4a4a"></div><div class="a" style="left:405px;top:120px;width:8px;height:1px;background:#4a4a4a"></div><div class="a" style="left:397px;top:123px;width:16px;height:1px;background:#4a4a4a"></div>
<svg class="a" style="left:397px;top:113px" width="8" height="8"><path d="M7.5 4 L4 0.8 V2.8 H0.5 V5.2 H4 V7.2 Z" fill="#3f7fce"/></svg>
<div class="a" style="left:420px;top:76px;width:1px;height:53px;background:#d4d4d4"></div>
<svg class="a" style="left:427px;top:78px" width="17" height="17"><rect x="1.5" y="1.5" width="9" height="4" fill="none" stroke="#555"/><path d="M3 3.5 H15" stroke="#3f7fce"/><rect x="1.5" y="8.5" width="9" height="7" fill="none" stroke="#555"/><path d="M3 10.5 H9 M3 13 H9" stroke="#3f7fce"/><path d="M15 5 V8.5 A2 2 0 0 1 13 10.5 H10.5" fill="none" stroke="#3f7fce" stroke-width="1.2"/><path d="M12 8.5 L10 10.5 L12 12.5" fill="none" stroke="#3f7fce" stroke-width="1.2"/></svg>
<div class="t" style="left:447.25px;top:81.75px;font-size:12.5px;line-height:12.5px;color:#363636;transform:scaleX(0.9492);transform-origin:0.05px 0;">Ajustar texto</div>
<svg class="a" style="left:427px;top:109px" width="17" height="17" opacity="0.55"><rect x="1.5" y="1.5" width="14" height="14" fill="none" stroke="#555"/><path d="M1.5 5 H15.5 M1.5 12 H15.5 M8 1.5 V5 M8 12 V15.5" stroke="#555"/><path d="M3.5 8.5 H13.5 M5 7 L3.5 8.5 L5 10 M12 7 L13.5 8.5 L12 10" fill="none" stroke="#3f7fce"/></svg>
<div class="t" style="left:446.85px;top:112.75px;font-size:12.5px;line-height:12.5px;color:#a6a6a6;transform:scaleX(0.9630);transform-origin:0.65px 0;">Combinar y centrar</div>
<svg class="a" style="left:559.0px;top:117.0px" width="5" height="3"><path d="M0 0 H5 L2.5 3 Z" fill="#b5b5b5"/></svg>
<div class="a" style="left:578px;top:76px;width:131px;height:23px;background:#fff;border:1px solid #c6c6c6"></div>
<div class="t" style="left:581.35px;top:81.75px;font-size:12.5px;line-height:12.5px;color:#363636;transform:scaleX(0.9070);transform-origin:0.65px 0;">General</div>
<svg class="a" style="left:699.0px;top:86.0px" width="5" height="3"><path d="M0 0 H5 L2.5 3 Z" fill="#555"/></svg>
<div class="t" style="left:585.85px;top:110.00px;font-size:15px;line-height:15px;color:#444;transform:scaleX(0.9182);transform-origin:0.15px 0;">$</div>
<svg class="a" style="left:603.0px;top:117.0px" width="5" height="3"><path d="M0 0 H5 L2.5 3 Z" fill="#555"/></svg>
<div class="t" style="left:617.20px;top:112.00px;font-size:14px;line-height:14px;color:#444;transform:scaleX(1.0306);transform-origin:0.50px 0;">%</div>
<div class="t" style="left:637.45px;top:113.50px;font-size:9px;line-height:9px;color:#444;font-weight:bold;transform:scaleX(0.9930);transform-origin:0.35px 0;">000</div>
<div class="a" style="left:660px;top:107px;width:1px;height:22px;background:#d4d4d4"></div>
<svg class="a" style="left:667px;top:110px" width="17" height="16"><path d="M1.5 4.3 H8 M4.5 1.3 L1.5 4.3 L4.5 7.3" fill="none" stroke="#3f7fce" stroke-width="1.5"/></svg>
<div class="t" style="left:677.20px;top:110.00px;font-size:8px;line-height:8px;color:#444;font-weight:bold;transform:scaleX(1.1842);transform-origin:0.30px 0;">0</div>
<div class="t" style="left:669.25px;top:118.00px;font-size:8px;line-height:8px;color:#444;font-weight:bold;transform:scaleX(1.1961);transform-origin:0.55px 0;">,00</div>
<svg class="a" style="left:689px;top:110px" width="17" height="16"><path d="M0.5 11.5 H7 M4 8.5 L7 11.5 L4 14.5" fill="none" stroke="#3f7fce" stroke-width="1.5"/></svg>
<div class="t" style="left:691.85px;top:110.00px;font-size:8px;line-height:8px;color:#444;font-weight:bold;transform:scaleX(1.1667);transform-origin:0.55px 0;">,00</div>
<div class="t" style="left:696.45px;top:118.00px;font-size:8px;line-height:8px;color:#444;font-weight:bold;transform:scaleX(1.2696);transform-origin:0.55px 0;">,0</div>
<svg class="a" style="left:740px;top:72px" width="32" height="32"><rect x="1" y="1" width="28" height="25" fill="#fff"/><path d="M0.5 0.5 H28.5 V25.5 H0.5 Z M7.5 0.5 V25.5 M14.5 0.5 V25.5 M21.5 0.5 V25.5 M0.5 6.5 H28.5 M0.5 12.5 H28.5 M0.5 18.5 H28.5" fill="none" stroke="#8a8a8a" stroke-width="1"/><rect x="8" y="1" width="6" height="5" fill="#e0693a"/><rect x="8" y="7" width="12" height="5" fill="#4a7ec2"/><rect x="8" y="13" width="9" height="5" fill="#e0693a"/><rect x="8" y="19" width="4" height="6" fill="#4a7ec2"/><rect x="15.5" y="18.5" width="15" height="12" fill="#fff" stroke="#666" stroke-width="1"/><path d="M19.5 22.5 H26.5 M19.5 25.5 H26.5 M25 20 L21 28" stroke="#333" stroke-width="1"/></svg>
<div class="t" style="left:732.55px;top:107.75px;font-size:12.5px;line-height:12.5px;color:#363636;transform:scaleX(0.9733);transform-origin:1.05px 0;">Formato</div>
<div class="t" style="left:719.95px;top:123.75px;font-size:12.5px;line-height:12.5px;color:#363636;transform:scaleX(0.9730);transform-origin:0.55px 0;">condicional</div>
<svg class="a" style="left:784.0px;top:128.5px" width="5" height="3"><path d="M0 0 H5 L2.5 3 Z" fill="#555"/></svg>
<svg class="a" style="left:815px;top:74px" width="32" height="30"><rect x="1" y="1" width="25" height="20" fill="#fff"/><rect x="7" y="6" width="19" height="15" fill="#c5d6ee"/><path d="M0.5 0.5 H25.5 V20.5 H0.5 Z M6.5 0.5 V20.5 M12.5 0.5 V20.5 M18.5 0.5 V20.5 M0.5 5.5 H25.5 M0.5 10.5 H25.5 M0.5 15.5 H25.5" fill="none" stroke="#8a8a8a" stroke-width="1"/><path d="M29 5 L19 16 L22 19 L31 8 Z" fill="#6f6f6f"/><path d="M8 29 C10 23 13 19 17.5 17.5 C21 17 22.5 20.5 20 24 C17.5 27 12 28 8 29 Z" fill="#3f7fce"/><path d="M17 20 C19 19 20 21 19 22" fill="none" stroke="#fff" stroke-width="1"/></svg>
<div class="t" style="left:795.95px;top:107.75px;font-size:12.5px;line-height:12.5px;color:#363636;transform:scaleX(0.9868);transform-origin:1.05px 0;">Dar formato</div>
<div class="t" style="left:794.85px;top:123.75px;font-size:12.5px;line-height:12.5px;color:#363636;transform:scaleX(0.9076);transform-origin:0.55px 0;">como tabla</div>
<svg class="a" style="left:857.0px;top:128.5px" width="5" height="3"><path d="M0 0 H5 L2.5 3 Z" fill="#555"/></svg>
<svg class="a" style="left:879px;top:72px" width="32" height="32"><rect x="1" y="1" width="25" height="21" fill="#fff"/><rect x="8" y="7" width="11" height="10" fill="#c5d6ee"/><path d="M0.5 0.5 H26.5 V21.5 H0.5 Z M7.5 0.5 V21.5 M19.5 0.5 V21.5 M0.5 6.5 H26.5 M0.5 16.5 H26.5" fill="none" stroke="#8a8a8a" stroke-width="1"/><path d="M29 7 L19 18 L22 21 L31 10 Z" fill="#6f6f6f"/><path d="M8 30 C10 25 13 21 17.5 19.5 C21 19 22.5 22.5 20 26 C17.5 29 12 29.5 8 30 Z" fill="#3f7fce"/><path d="M17 22 C19 21 20 23 19 24" fill="none" stroke="#fff" stroke-width="1"/></svg>
<div class="t" style="left:867.25px;top:107.75px;font-size:12.5px;line-height:12.5px;color:#363636;transform:scaleX(0.9335);transform-origin:1.05px 0;">Estilos de</div>
<div class="t" style="left:874.45px;top:123.75px;font-size:12.5px;line-height:12.5px;color:#363636;transform:scaleX(0.9199);transform-origin:0.55px 0;">celda</div>
<svg class="a" style="left:905.5px;top:128.5px" width="5" height="3"><path d="M0 0 H5 L2.5 3 Z" fill="#555"/></svg>
<svg class="a" style="left:937px;top:72px" width="28" height="29"><path d="M1.5 1.5 H16 V6.5 H1.5 Z M8.75 1.5 V6.5" fill="#fff" stroke="#6f6f6f"/><path d="M12.5 9.5 H26.5 V14.5 H12.5 Z" fill="#c5d6ee" stroke="#6f6f6f"/><path d="M19.5 9.5 V14.5" stroke="#6f6f6f"/><path d="M2 12 L5 9 V11 H9 V13 H5 V15 Z" fill="#3f7fce"/><path d="M1.5 17.5 H16 V27.5 H1.5 Z M8.75 17.5 V27.5 M1.5 22.5 H16" fill="#fff" stroke="#6f6f6f"/></svg>
<div class="t" style="left:930.25px;top:107.75px;font-size:12.5px;line-height:12.5px;color:#363636;transform:scaleX(0.9439);transform-origin:1.15px 0;">Insertar</div>
<svg class="a" style="left:948.0px;top:128.0px" width="5" height="3"><path d="M0 0 H5 L2.5 3 Z" fill="#555"/></svg>
<svg class="a" style="left:982px;top:72px" width="32" height="30"><path d="M1.5 1.5 H16 V6.5 H1.5 Z M8.75 1.5 V6.5" fill="#fff" stroke="#6f6f6f"/><path d="M7.5 9.5 H17.5 V14.5 H7.5 Z" fill="#c5d6ee" stroke="#6f6f6f"/><path d="M1.5 18.5 H16 V28.5 H1.5 Z M8.75 18.5 V28.5 M1.5 23.5 H16" fill="#fff" stroke="#6f6f6f"/><path d="M16.5 7 L29.5 19.5 M29.5 7 L16.5 19.5" stroke="#e0693a" stroke-width="2"/></svg>
<div class="t" style="left:974.35px;top:107.75px;font-size:12.5px;line-height:12.5px;color:#363636;transform:scaleX(0.9749);transform-origin:1.05px 0;">Eliminar</div>
<svg class="a" style="left:994.0px;top:128.0px" width="5" height="3"><path d="M0 0 H5 L2.5 3 Z" fill="#555"/></svg>
<svg class="a" style="left:1031px;top:71px" width="31" height="33"><path d="M2 3.5 H23 M5 1 L2 3.5 L5 6 M20 1 L23 3.5 L20 6" fill="none" stroke="#3f7fce" stroke-width="1.2"/><path d="M1.5 0.5 V6.5 M23.5 0.5 V6.5" stroke="#3f7fce"/><path d="M1.5 7.5 H28.5 V28.5 H1.5 Z" fill="#fff" stroke="#6f6f6f"/><path d="M8.5 7.5 V28.5 M16.5 7.5 V28.5 M23.5 7.5 V28.5 M1.5 12.5 H28.5 M1.5 22.5 H28.5" stroke="#6f6f6f"/><rect x="8.5" y="12.5" width="8" height="10" fill="#4a7ec2"/><path d="M1.5 28.5 V31.5 H9 L11 28.5 M11 28.5 V31.5 H18 L20 28.5" fill="none" stroke="#6f6f6f"/></svg>
<div class="t" style="left:1022.35px;top:107.75px;font-size:12.5px;line-height:12.5px;color:#363636;transform:scaleX(0.9844);transform-origin:1.05px 0;">Formato</div>
<svg class="a" style="left:1043.0px;top:128.0px" width="5" height="3"><path d="M0 0 H5 L2.5 3 Z" fill="#555"/></svg>
<svg class="a" style="left:1082px;top:70px" width="18" height="18"><path d="M16 2.3 H2 L9.5 9 L2 15.7 H16.2" fill="none" stroke="#333" stroke-width="2.6" stroke-linejoin="miter"/></svg>
<svg class="a" style="left:1105.0px;top:78.0px" width="5" height="3"><path d="M0 0 H5 L2.5 3 Z" fill="#555"/></svg>
<svg class="a" style="left:1083px;top:93px" width="17" height="18"><rect x="1.5" y="1.5" width="13.5" height="15" fill="#fff" stroke="#6f6f6f"/><rect x="1" y="1" width="14.5" height="3" fill="#6f6f6f"/><path d="M8.25 6 V13 M5 10 L8.25 13.2 L11.5 10" fill="none" stroke="#3f7fce" stroke-width="1.8"/></svg>
<svg class="a" style="left:1103.0px;top:101.0px" width="5" height="3"><path d="M0 0 H5 L2.5 3 Z" fill="#555"/></svg>
<svg class="a" style="left:1083px;top:117px" width="16" height="15"><path d="M1 10 L10.5 1 L15 5.5 L5.5 14.5 Z" fill="#ea8892"/><path d="M4.2 7 L8.8 11.5" stroke="#f7d0d4" stroke-width="1"/></svg>
<svg class="a" style="left:1103.0px;top:124.0px" width="5" height="3"><path d="M0 0 H5 L2.5 3 Z" fill="#555"/></svg>
<svg class="a" style="left:1127px;top:73px" width="32" height="29"><path d="M1.5 12.5 L6 1.5 L10.5 12.5 M3 9 H9" fill="none" stroke="#3f7fce" stroke-width="2"/><path d="M2 16 H10.5 L2.5 25.8 H11.5" fill="none" stroke="#9b59c9" stroke-width="2"/><path d="M13 8 H30 L23.5 15 V22.5 H19.5 V15 Z" fill="#7a7a7a"/><rect x="20.5" y="15.5" width="2" height="6" fill="#f1f1f1"/></svg>
<div class="t" style="left:1117.00px;top:107.75px;font-size:12.5px;line-height:12.5px;color:#363636;transform:scaleX(0.9354);transform-origin:0.60px 0;">Ordenar y</div>
<div class="t" style="left:1124.80px;top:123.75px;font-size:12.5px;line-height:12.5px;color:#363636;transform:scaleX(1.0055);transform-origin:0.20px 0;">filtrar</div>
<svg class="a" style="left:1156.0px;top:128.5px" width="5" height="3"><path d="M0 0 H5 L2.5 3 Z" fill="#555"/></svg>
<svg class="a" style="left:1193px;top:72px" width="30" height="29"><circle cx="18.5" cy="10.5" r="8.3" fill="#fff" stroke="#3f7fce" stroke-width="2.3"/><path d="M12.5 16.5 L3 26" stroke="#3f7fce" stroke-width="3.4" stroke-linecap="round"/></svg>
<div class="t" style="left:1185.45px;top:107.75px;font-size:12.5px;line-height:12.5px;color:#363636;transform:scaleX(0.9148);transform-origin:1.05px 0;">Buscar y</div>
<div class="t" style="left:1173.65px;top:123.75px;font-size:12.5px;line-height:12.5px;color:#363636;transform:scaleX(0.9417);transform-origin:0.35px 0;">seleccionar</div>
<svg class="a" style="left:1236.0px;top:128.5px" width="5" height="3"><path d="M0 0 H5 L2.5 3 Z" fill="#555"/></svg>
<div class="a" style="left:5px;top:168px;width:102px;height:26px;background:#fff;border:1px solid #c6c6c6"></div>
<div class="t" style="left:11.95px;top:175.75px;font-size:12.5px;line-height:12.5px;color:#363636;">A2</div>
<svg class="a" style="left:93.0px;top:178.0px" width="7" height="4"><path d="M0 0 H7 L3.5 4 Z" fill="#666"/></svg>
<div class="a" style="left:121px;top:176px;width:2px;height:2px;background:#9a9a9a"></div>
<div class="a" style="left:121px;top:180px;width:2px;height:2px;background:#9a9a9a"></div>
<div class="a" style="left:121px;top:184px;width:2px;height:2px;background:#9a9a9a"></div>
<div class="a" style="left:137px;top:168px;width:110px;height:26px;background:#fff;border:1px solid #c6c6c6"></div>
<svg class="a" style="left:150px;top:176px" width="12" height="11"><path d="M1 0.8 L11 10.2 M11 0.8 L1 10.2" stroke="#b4b4b4" stroke-width="1.5"/></svg>
<svg class="a" style="left:186px;top:176px" width="14" height="11"><path d="M1 5.5 L4.5 9.8 L12.8 0.8" fill="none" stroke="#b4b4b4" stroke-width="1.6"/></svg>
<div class="t" style="left:222.5px;top:174px;font-family:'Liberation Serif',serif;font-style:italic;font-weight:bold;font-size:14px;line-height:14px;color:#555">f</div>
<div class="t" style="left:227px;top:176px;font-family:'Liberation Serif',serif;font-style:italic;font-weight:bold;font-size:11px;line-height:11px;color:#555">x</div>
<div class="a" style="left:250px;top:168px;width:1025px;height:26px;background:#fff;border:1px solid #c6c6c6"></div>
<div class="t" style="left:261.50px;top:175.75px;font-size:12.5px;line-height:12.5px;color:#363636;">582569XFB</div>
<svg class="a" style="left:1262px;top:177px" width="9" height="7"><path d="M1 1.2 L4.5 4.8 L8 1.2" fill="none" stroke="#555" stroke-width="1.8"/></svg>
<div class="a" style="left:1259px;top:204px;width:21px;height:484px;background:#e6e6e6"></div>
<div class="a" style="left:1262px;top:363px;width:15px;height:325px;background:#dedede"></div>
<div class="a" style="left:1262px;top:206px;width:15px;height:157px;background:#fff;border:1px solid #a8a8a8"></div>
<div class="a" style="left:1262px;top:221px;width:15px;height:1px;background:#a8a8a8"></div>
<svg class="a" style="left:1265px;top:210px" width="9" height="6"><path d="M0 5 H9 L4.5 0.5 Z" fill="#666"/></svg>
</body></html>
